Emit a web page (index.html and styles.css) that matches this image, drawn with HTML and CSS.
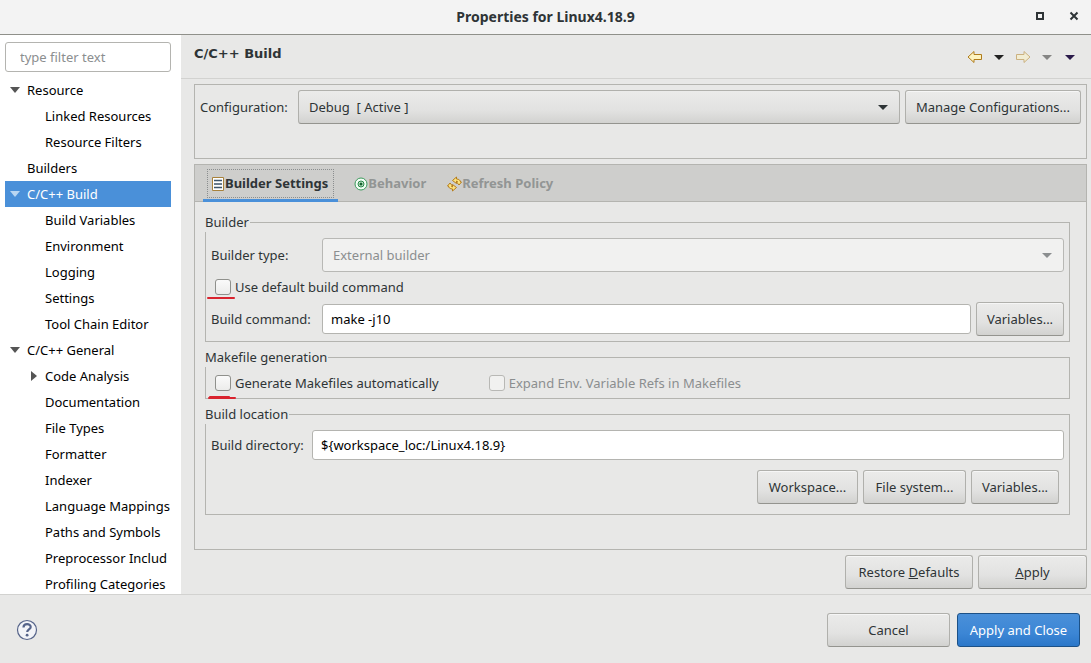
FILE: index.html
```html
<!DOCTYPE html>
<html lang="en">

<head>
    <meta charset="UTF-8">
    <meta name="viewport" content="width=device-width, initial-scale=1.0">
    <title>Properties for Linux4.18.9</title>
    <link rel="stylesheet" href="styles.css">
</head>

<body>
    <header class="titlebar">
        <h1>Properties for Linux4.18.9</h1>
        <div class="window-buttons">
            <button type="button" aria-label="Maximize">
                <svg width="10" height="10" viewBox="0 0 10 10"><path d="M2 2h6v6h-6z" fill="none" stroke="#2e3436" stroke-width="2"/></svg>
            </button>
            <button type="button" aria-label="Close">
                <svg width="10" height="10" viewBox="0 0 10 10"><path d="M1.500 1.500l7 7M8.500 1.500l-7 7" fill="none" stroke="#2e3436" stroke-width="2"/></svg>
            </button>
        </div>
    </header>

    <div class="content">
        <nav class="sidebar">
            <input type="text" class="filter" placeholder="type filter text" aria-label="Filter">
            <ul class="tree">
                <li class="open"><a href="#">Resource</a></li>
                <li class="child"><a href="#">Linked Resources</a></li>
                <li class="child"><a href="#">Resource Filters</a></li>
                <li><a href="#">Builders</a></li>
                <li class="open selected"><a href="#">C/C++ Build</a></li>
                <li class="child"><a href="#">Build Variables</a></li>
                <li class="child"><a href="#">Environment</a></li>
                <li class="child"><a href="#">Logging</a></li>
                <li class="child"><a href="#">Settings</a></li>
                <li class="child"><a href="#">Tool Chain Editor</a></li>
                <li class="open"><a href="#">C/C++ General</a></li>
                <li class="child closed"><a href="#">Code Analysis</a></li>
                <li class="child"><a href="#">Documentation</a></li>
                <li class="child"><a href="#">File Types</a></li>
                <li class="child"><a href="#">Formatter</a></li>
                <li class="child"><a href="#">Indexer</a></li>
                <li class="child"><a href="#">Language Mappings</a></li>
                <li class="child"><a href="#">Paths and Symbols</a></li>
                <li class="child"><a href="#">Preprocessor Includ</a></li>
                <li class="child"><a href="#">Profiling Categories</a></li>
            </ul>
        </nav>

        <main class="page">
            <div class="page-header">
                <h2>C/C++ Build</h2>
                <div class="history">
                    <button type="button" aria-label="Back">
                        <svg width="16" height="14" viewBox="0 0 16 14"><path d="M1 7l6-5.500v3h7.500v5h-7.500v3z" fill="#fdf3c0" stroke="#b07c1c" stroke-linejoin="round"/></svg>
                    </button>
                    <button type="button" class="menu-arrow" aria-label="Back history"></button>
                    <button type="button" class="faded" aria-label="Forward">
                        <svg width="16" height="14" viewBox="0 0 16 14"><path d="M15 7l-6-5.500v3h-7.500v5h7.500v3z" fill="#fdf3c0" stroke="#b07c1c" stroke-linejoin="round"/></svg>
                    </button>
                    <button type="button" class="menu-arrow faded" aria-label="Forward history"></button>
                    <button type="button" class="menu-arrow view-menu" aria-label="View menu"></button>
                </div>
            </div>

            <section class="panel config">
                <label for="configuration">Configuration:</label>
                <div class="combo">
                    <select id="configuration">
                        <option>Debug&nbsp; [ Active ]</option>
                    </select>
                </div>
                <button type="button" class="btn manage">Manage Configurations...</button>
            </section>

            <section class="panel settings">
                <div class="tabs" role="tablist">
                    <button type="button" class="tab active" role="tab" aria-selected="true">
                        <span>
                            <svg width="14" height="16" viewBox="0 0 14 16"><path d="M1.500 1.500h11v13h-11z" fill="#fff" stroke="#a8823c"/><path d="M3 4.500h8M3 8h8M3 11.500h8" stroke="#3b5368" stroke-width="1.500"/></svg>Builder Settings
                        </span>
                    </button>
                    <button type="button" class="tab" role="tab" aria-selected="false">
                        <span>
                            <svg width="14" height="14" viewBox="0 0 14 14"><circle cx="7" cy="7" r="6" fill="#f4fff6" stroke="#3c9a5c"/><circle cx="7" cy="7" r="3" fill="#bfe8c8" stroke="#2a8548"/><circle cx="7" cy="7" r="1.500" fill="#14602e"/></svg>Behavior
                        </span>
                    </button>
                    <button type="button" class="tab" role="tab" aria-selected="false">
                        <span>
                            <svg width="15" height="16" viewBox="0 0 15 16"><g fill="#fce37c" stroke="#b57d1d" stroke-linejoin="round"><path d="M5.500 4.500l4-3.500v2c2.500 0 4 1.500 4 3l1 0l-2.500 3l-2.500-3h1c0-.7-.5-1-1-1v2.500z"/><path d="M9.500 11.500l-4 3.500v-2c-2.500 0-4-1.500-4-3l-1 0l2.500-3l2.500 3h-1c0 .7.500 1 1 1v-2.500z"/></g></svg>Refresh Policy
                        </span>
                    </button>
                </div>

                <form class="groups">
                    <fieldset class="builder">
                        <legend>Builder</legend>
                        <div class="row">
                            <label for="builderType">Builder type:</label>
                            <div class="combo disabled">
                                <select id="builderType" disabled>
                                    <option>External builder</option>
                                </select>
                            </div>
                        </div>
                        <div class="checks">
                            <label class="check">
                                <input type="checkbox">Use default build command
                                <svg class="mark" width="30" height="4" viewBox="0 0 30 4"><path d="M1 2h26" stroke="#d9232e" stroke-width="2" stroke-linecap="round"/></svg>
                            </label>
                        </div>
                        <div class="row">
                            <label for="buildCommand">Build command:</label>
                            <input type="text" id="buildCommand" value="make -j10">
                            <button type="button" class="btn variables">Variables...</button>
                        </div>
                    </fieldset>

                    <fieldset class="makefile">
                        <legend>Makefile generation</legend>
                        <div class="checks">
                            <label class="check">
                                <input type="checkbox">Generate Makefiles automatically
                                <svg class="mark" width="30" height="4" viewBox="0 0 30 4"><path d="M3 2h19M2 3h26" stroke="#d9232e" stroke-width="2" stroke-linecap="round"/></svg>
                            </label>
                            <label class="check disabled">
                                <input type="checkbox" disabled>Expand Env. Variable Refs in Makefiles
                            </label>
                        </div>
                    </fieldset>

                    <fieldset class="location">
                        <legend>Build location</legend>
                        <div class="row">
                            <label for="buildDirectory">Build directory:</label>
                            <input type="text" id="buildDirectory" value="${workspace_loc:/Linux4.18.9}">
                        </div>
                        <div class="buttons">
                            <button type="button" class="btn workspace">Workspace...</button>
                            <button type="button" class="btn filesystem">File system...</button>
                            <button type="button" class="btn variables">Variables...</button>
                        </div>
                    </fieldset>
                </form>
            </section>

            <div class="page-buttons">
                <button type="button" class="btn restore">Restore <u>D</u>efaults</button>
                <button type="button" class="btn apply"><u>A</u>pply</button>
            </div>
        </main>
    </div>

    <footer class="footer">
        <button type="button" class="help" aria-label="Help">
            <svg width="22" height="22" viewBox="0 0 22 22"><circle cx="11" cy="11" r="9.500" fill="#f3f4f8" stroke="#56648a" stroke-width="1.200"/><path d="M7.500 8.500c0-4.500 7.200-4.300 7.200-.6c0 2.400-3.500 2.600-3.500 5" fill="none" stroke="#56648a" stroke-width="2.200"/><circle cx="11.100" cy="16.200" r="1.400" fill="#56648a"/></svg>
        </button>
        <button type="button" class="btn wide">Cancel</button>
        <button type="button" class="btn wide primary">Apply and Close</button>
    </footer>
</body>

</html>
```
FILE: styles.css
```css
* {
    box-sizing: border-box;
}

body {
    display: flex;
    flex-direction: column;
    height: 100vh;
    margin: 0;
    overflow: hidden;
    background-color: #e8e8e7;
    color: #2e3436;
    font-family: "Noto Sans", "Open Sans", sans-serif;
    font-size: 13px;
    line-height: 19px;
}

button,
input,
select {
    margin: 0;
    color: inherit;
    font: inherit;
}

button {
    padding: 0;
    border: none;
    background: none;
}

svg {
    display: block;
    flex: none;
}

/* title bar */
.titlebar {
    display: grid;
    grid-template-columns: 1fr auto 1fr;
    align-items: center;
    flex: none;
    height: 35px;
    padding-bottom: 2px;
    border-bottom: 1px solid #8f908a;
    background-color: #f3f3f3;
}

.titlebar h1 {
    grid-column: 2;
    margin: 0;
    font-size: 14px;
}

.window-buttons {
    display: flex;
    justify-content: flex-end;
    gap: 24px;
    padding-right: 12px;
}

.content {
    display: flex;
    flex: 1;
    min-height: 0;
}

/* page tree */
.sidebar {
    flex: none;
    width: 181px;
    padding: 7px 10px 0 5px;
    overflow: hidden;
    background-color: #fff;
}

input[type="text"] {
    width: 100%;
    min-width: 0;
    height: 30px;
    padding: 0 8px;
    border: 1px solid #b4b4b0;
    border-radius: 3px;
    background-color: #fff;
    color: #000;
}

input.filter {
    display: block;
    padding: 0 14px;
}

.filter::placeholder {
    color: #8b8e8f;
}

.tree {
    margin: 5px 0 0;
    padding: 0;
    list-style: none;
}

.tree li {
    display: flex;
    align-items: center;
    height: 26px;
    padding-left: 22px;
    white-space: nowrap;
}

.tree a {
    color: #000;
    text-decoration: none;
}

.tree .child {
    padding-left: 40px;
}

.tree .open {
    padding-left: 5px;
}

.tree .child.closed {
    padding-left: 26px;
}

.open::before {
    content: "";
    margin-right: 7px;
    border: 5px solid transparent;
    border-top: 6px solid #555;
    border-bottom: 0;
}

.closed::before {
    content: "";
    margin-right: 8px;
    border: 5px solid transparent;
    border-left: 6px solid #555;
    border-right: 0;
}

.tree .selected {
    background-color: #4a90d9;
}

.tree .selected a {
    color: #fff;
}

.selected::before {
    border-top-color: #b9d6f2;
}

/* properties page */
.page {
    display: flex;
    flex: 1;
    flex-direction: column;
    min-width: 0;
}

.page-header {
    display: flex;
    justify-content: space-between;
    height: 44px;
    padding: 9px 16px 0 13px;
    border-bottom: 1px solid #d2d2d0;
}

.page-header h2 {
    margin: 0;
    font-family: "DejaVu Sans", sans-serif;
    font-size: 13px;
}

.history {
    display: flex;
    align-items: center;
    height: 26px;
    gap: 11px;
}

.menu-arrow {
    border: 5px solid transparent;
    border-top-color: #222;
    border-bottom: 0;
}

.view-menu {
    margin-left: 2px;
    border-top-color: #2a1a4a;
}

.faded {
    opacity: 0.5;
}

.panel {
    margin: 5px 4px 0 13px;
    border: 1px solid #b4b4b0;
}

.config {
    display: flex;
    height: 75px;
    padding: 5px;
    gap: 5px;
}

.config label {
    flex: none;
    width: 93px;
    line-height: 34px;
}

.btn {
    flex: none;
    height: 34px;
    padding: 0 8px;
    border: 1px solid #b0b0ac;
    border-bottom-color: #94948f;
    border-radius: 3px;
    background: linear-gradient(#ebebea, #e2e2e1 60%, #d2d2d0);
    box-shadow: inset 0 1px #f6f6f6;
    white-space: nowrap;
}

.manage {
    width: 176px;
}

.combo {
    position: relative;
    flex: 1;
    min-width: 0;
}

.combo::after {
    content: "";
    position: absolute;
    top: 15px;
    right: 12px;
    border: 5px solid transparent;
    border-top-color: #2e3436;
    border-bottom: 0;
    pointer-events: none;
}

.combo select {
    display: block;
    width: 100%;
    height: 34px;
    padding: 0 10px;
    border: 1px solid #b0b0ac;
    border-bottom-color: #94948f;
    border-radius: 3px;
    background: linear-gradient(#ebebea, #e2e2e1 60%, #d2d2d0);
    appearance: none;
}

.combo.disabled::after {
    border-top-color: #8b8e8f;
}

.combo.disabled select {
    border-color: #b8b8b5;
    background: #f1f1f0;
    color: #8b8e8f;
    opacity: 1;
}

/* tabs */
.settings {
    flex: 1;
}

.tabs {
    display: flex;
    height: 37px;
    padding-left: 8px;
    border-bottom: 1px solid #b4b4b0;
    background-color: #cececc;
}

.tab {
    display: flex;
    height: 37px;
    padding: 4px 4px 0;
    border-bottom: 3px solid transparent;
    color: #929594;
    font-weight: bold;
}

.tab + .tab {
    margin-left: 8px;
}

.tab span {
    display: flex;
    align-items: center;
    height: 29px;
    padding-left: 3px;
    border: 1px dotted transparent;
}

.tab.active {
    border-bottom-color: #4a90d9;
    color: #2e3436;
}

.tab.active span {
    padding-right: 5px;
    border-color: #8b8e8f;
}

/* groups */
.groups {
    padding: 11px 16px 0 10px;
}

fieldset {
    min-width: 0;
    margin: 0 0 6px;
    padding: 0 5px;
    border: 1px solid #b4b4b0;
}

legend {
    margin-left: -6px;
    padding: 0 1px 0 0;
}

.row {
    display: flex;
    gap: 5px;
    align-items: center;
}

.row > label {
    flex: none;
    width: 96px;
}

.builder .row > label {
    width: 106px;
}

.builder {
    padding: 6px 5px 5px;
}

.makefile {
    padding: 1px 5px 0;
}

.checks {
    display: flex;
    height: 30px;
    padding-left: 4px;
    gap: 50px;
}

.check {
    display: flex;
    align-items: center;
    position: relative;
    gap: 4px;
    white-space: nowrap;
}

.check.disabled {
    color: #8b8e8f;
}

.check input {
    width: 16px;
    height: 16px;
    border: 1px solid #8f908c;
    border-radius: 3px;
    background: linear-gradient(#fafafa, #ececeb);
    appearance: none;
}

.check.disabled input {
    border-color: #b8b8b5;
    background: #f1f1f0;
}

.mark {
    position: absolute;
    left: -8px;
    bottom: 2px;
}

.makefile .mark {
    bottom: -1px;
}

.location {
    padding: 6px 5px 10px;
}

.buttons {
    display: flex;
    justify-content: flex-end;
    padding: 10px 5px 0 0;
    gap: 5px;
}

.workspace {
    width: 101px;
}

.filesystem {
    width: 103px;
}

.variables {
    width: 88px;
}

.page-buttons {
    display: flex;
    justify-content: flex-end;
    padding: 5px 4px;
    gap: 5px;
}

.restore {
    width: 128px;
}

.apply {
    width: 109px;
}

/* footer */
.footer {
    display: flex;
    align-items: center;
    flex: none;
    height: 69px;
    padding: 2px 11px 0 16px;
    gap: 7px;
    border-top: 1px solid #d2d2d0;
}

.help {
    margin-right: auto;
}

.wide {
    width: 123px;
}

.primary {
    border-color: #1c5187;
    background: linear-gradient(#4a90d9, #3c86d5 60%, #2b77c9);
    box-shadow: none;
    color: #fff;
}
```
